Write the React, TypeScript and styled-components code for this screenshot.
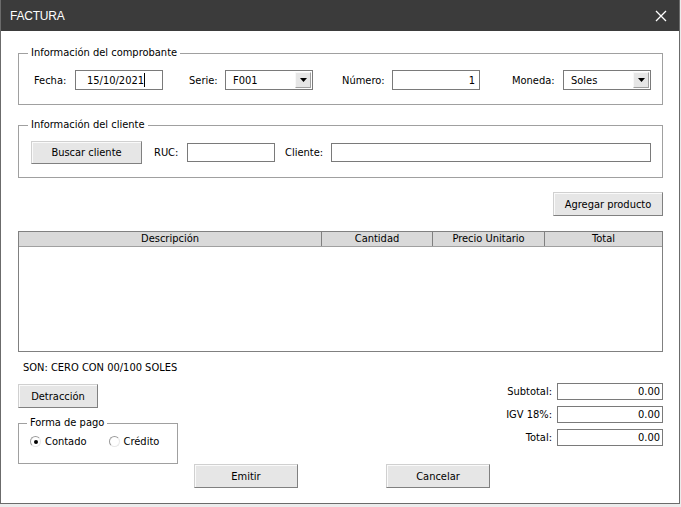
import styled, { createGlobalStyle } from 'styled-components';

const GlobalStyle = createGlobalStyle`
  html, body {
    margin: 0;
    padding: 0;
    background: #ececec;
  }
  body {
    font-family: 'DejaVu Sans Condensed', 'DejaVu Sans', sans-serif;
    font-stretch: condensed;
    font-size: 11px;
    color: #000;
  }
  * {
    box-sizing: border-box;
  }
`;

const Arrow = () => (
  <svg width="7" height="4" viewBox="0 0 7 4">
    <path d="M0 0 H7 L3.5 4 Z" fill="#000" />
  </svg>
);

const CloseIcon = () => (
  <svg width="12" height="12" viewBox="0 0 12 12">
    <path d="M1 1 L11 11 M11 1 L1 11" stroke="#fff" strokeWidth="1.3" />
  </svg>
);

const App = () => {
  return (
    <>
      <GlobalStyle />
      <Window>
        <TitleBar>
          <Title>FACTURA</Title>
          <CloseButton>
            <CloseIcon />
          </CloseButton>
        </TitleBar>

        <Body>
          <Frame $pt={10} $pb={14}>
            <Legend>Información del comprobante</Legend>
            <Row>
              <Label $w={41}>Fecha:</Label>
              <Input $w={88}>
                15/10/2021<Caret />
              </Input>
              <Label $w={36} $ml={26}>Serie:</Label>
              <Select $w={88}>
                <span>F001</span>
                <DropButton>
                  <Arrow />
                </DropButton>
              </Select>
              <Label $w={50} $ml={29}>Número:</Label>
              <Input $w={88} $right>1</Input>
              <Label $w={51} $ml={32}>Moneda:</Label>
              <Select $w={88}>
                <span>Soles</span>
                <DropButton>
                  <Arrow />
                </DropButton>
              </Select>
            </Row>
          </Frame>

          <Frame $pt={9} $pb={13} $mt={13}>
            <Legend>Información del cliente</Legend>
            <Row>
              <Button $w={111} $h={23}>Buscar cliente</Button>
              <Label $w={33} $ml={12}>RUC:</Label>
              <Input $w={88} $h={19}></Input>
              <Label $w={46} $ml={10}>Cliente:</Label>
              <Input $w={320} $h={19}></Input>
            </Row>
          </Frame>

          <Toolbar>
            <Button $w={110} $h={24}>Agregar producto</Button>
          </Toolbar>

          <Table>
            <HeaderRow>
              <HeaderCell $w={303}>Descripción</HeaderCell>
              <HeaderCell $w={111}>Cantidad</HeaderCell>
              <HeaderCell $w={112}>Precio Unitario</HeaderCell>
              <HeaderCell $w={117} $last>Total</HeaderCell>
            </HeaderRow>
          </Table>

          <Amount>SON: CERO CON 00/100 SOLES</Amount>

          <Bottom>
            <LeftColumn>
              <Button $w={80} $h={24}>Detracción</Button>
              <PayFrame>
                <Legend>Forma de pago</Legend>
                <RadioRow>
                  <Radio>
                    <RadioDot $checked />
                    Contado
                  </Radio>
                  <Radio>
                    <RadioDot />
                    Crédito
                  </Radio>
                </RadioRow>
              </PayFrame>
            </LeftColumn>

            <Totals>
              <TotalRow>
                <TotalLabel>Subtotal:</TotalLabel>
                <TotalBox>0.00</TotalBox>
              </TotalRow>
              <TotalRow>
                <TotalLabel>IGV 18%:</TotalLabel>
                <TotalBox>0.00</TotalBox>
              </TotalRow>
              <TotalRow>
                <TotalLabel>Total:</TotalLabel>
                <TotalBox>0.00</TotalBox>
              </TotalRow>
            </Totals>
          </Bottom>

          <Actions>
            <Button $w={104} $h={24}>Emitir</Button>
            <Button $w={104} $h={24}>Cancelar</Button>
          </Actions>
        </Body>
      </Window>
    </>
  );
};

const Window = styled.div`
  width: 680px;
  height: 504px;
  background: #fff;
  border: 1px solid #6b6b6b;
  border-top: none;
  display: flex;
  flex-direction: column;
`;

const TitleBar = styled.div`
  height: 31px;
  background: #3b3b3b;
  display: flex;
  align-items: center;
  justify-content: space-between;
  padding: 0 10px 0 9px;
`;

const Title = styled.span`
  color: #fff;
  font-family: 'Liberation Sans', Arial, sans-serif;
  font-stretch: normal;
  font-size: 12px;
  letter-spacing: -0.2px;
`;

const CloseButton = styled.span`
  display: flex;
  align-items: center;
  padding-right: 2px;
`;

const Body = styled.div`
  padding: 15px 16px 0 17px;
  display: flex;
  flex-direction: column;
`;

const Frame = styled.fieldset<{ $pt: number; $pb: number; $mt?: number }>`
  margin: ${(p) => p.$mt ?? 0}px 0 0 0;
  padding: ${(p) => p.$pt}px 11px ${(p) => p.$pb}px 12px;
  border: 1px solid #a0a0a0;
  min-width: 0;
`;

const Legend = styled.legend`
  padding: 0 3px;
  margin-left: -3px;
  line-height: 14px;
`;

const Row = styled.div`
  display: flex;
  align-items: center;
`;

const Label = styled.span<{ $w: number; $ml?: number }>`
  width: ${(p) => p.$w}px;
  margin-left: ${(p) => p.$ml ?? 3}px;
  flex-shrink: 0;
`;

const Input = styled.div<{ $w: number; $h?: number; $right?: boolean }>`
  width: ${(p) => p.$w}px;
  height: ${(p) => p.$h ?? 20}px;
  border: 1px solid #7a7a7a;
  background: #fff;
  display: flex;
  align-items: center;
  justify-content: ${(p) => (p.$right ? 'flex-end' : 'flex-start')};
  padding: 0 4px 0 11px;
  flex-shrink: 0;
`;

const Caret = styled.span`
  display: inline-block;
  width: 1px;
  height: 14px;
  background: #000;
`;

const Select = styled.div<{ $w: number }>`
  width: ${(p) => p.$w}px;
  height: 20px;
  border: 1px solid #7a7a7a;
  background: #fff;
  display: flex;
  align-items: center;
  justify-content: space-between;
  padding: 1px 1px 1px 7px;
  flex-shrink: 0;
`;

const DropButton = styled.span`
  width: 16px;
  height: 16px;
  background: #e6e6e6;
  border-right: 1px solid #a0a0a0;
  border-bottom: 1px solid #a0a0a0;
  border-top: 1px solid #f8f8f8;
  border-left: 1px solid #f8f8f8;
  display: flex;
  align-items: center;
  justify-content: center;
`;

const Button = styled.div<{ $w: number; $h: number }>`
  width: ${(p) => p.$w}px;
  height: ${(p) => p.$h}px;
  background: #e6e6e6;
  border: 1px solid #d0d0d0;
  border-right-color: #808080;
  border-bottom-color: #808080;
  box-shadow: inset 1px 1px 0 #fafafa;
  display: flex;
  align-items: center;
  justify-content: center;
  flex-shrink: 0;
`;

const Toolbar = styled.div`
  display: flex;
  justify-content: flex-end;
  margin-top: 14px;
`;

const Table = styled.div`
  margin-top: 15px;
  height: 121px;
  border: 1px solid #808080;
  background: #fff;
`;

const HeaderRow = styled.div`
  display: flex;
  height: 15px;
  background: #d9d9d9;
  border-bottom: 1px solid #a0a0a0;
`;

const HeaderCell = styled.div<{ $w: number; $last?: boolean }>`
  width: ${(p) => p.$w}px;
  flex: ${(p) => (p.$last ? '1' : 'none')};
  border-right: ${(p) => (p.$last ? 'none' : '1px solid #808080')};
  text-align: center;
  line-height: 14px;
`;

const Amount = styled.div`
  margin: 9px 0 0 5px;
  line-height: 14px;
`;

const Bottom = styled.div`
  display: flex;
  justify-content: space-between;
  margin-top: 9px;
`;

const LeftColumn = styled.div`
  display: flex;
  flex-direction: column;
  gap: 8px;
`;

const PayFrame = styled.fieldset`
  margin: 0;
  width: 160px;
  height: 48px;
  padding: 5px 8px 0 11px;
  border: 1px solid #a0a0a0;
  min-width: 0;
`;

const RadioRow = styled.div`
  display: flex;
  gap: 22px;
`;

const Radio = styled.label`
  display: flex;
  align-items: center;
  gap: 4px;
`;

const RadioDot = styled.span<{ $checked?: boolean }>`
  width: 11px;
  height: 11px;
  border-radius: 50%;
  border: 1px solid #9a9a9a;
  border-right-color: #e8e8e8;
  border-bottom-color: #e8e8e8;
  background: #fff;
  display: flex;
  align-items: center;
  justify-content: center;
  &::after {
    content: '';
    width: 4px;
    height: 4px;
    border-radius: 50%;
    background: #000;
    display: ${(p) => (p.$checked ? 'block' : 'none')};
  }
`;

const Totals = styled.div`
  display: flex;
  flex-direction: column;
  gap: 6px;
  margin-top: -1px;
`;

const TotalRow = styled.div`
  display: flex;
  align-items: center;
  justify-content: flex-end;
  gap: 5px;
`;

const TotalLabel = styled.span``;

const TotalBox = styled.div`
  width: 106px;
  height: 17px;
  border: 1px solid #7a7a7a;
  text-align: right;
  padding-right: 2px;
  line-height: 15px;
`;

const Actions = styled.div`
  display: flex;
  gap: 88px;
  padding-left: 176px;
  margin-top: 0;
`;

export default App;
